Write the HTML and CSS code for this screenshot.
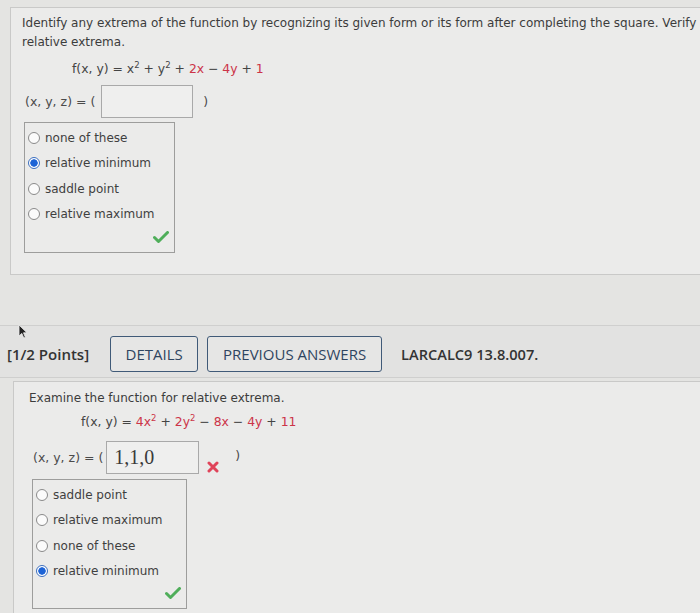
FILE: index.html
```html
<!DOCTYPE html>
<html>
<head>
<meta charset="utf-8">
<link rel="stylesheet" href="styles.css">
</head>
<body>
<div class="page">
  <section class="panel p1">
    <p class="prompt">Identify any extrema of the function by recognizing its given form or its form after completing the square. Verify relative extrema.</p>
    <div class="formula f1">f(x, y) = x<sup>2</sup> + y<sup>2</sup> + <span class="red">2x</span> &minus; <span class="red">4y</span> + <span class="red">1</span></div>
    <div class="answer a1">
      <span class="lbl">(x, y, z) = (</span>
      <span class="box"></span>
      <span class="close">)</span>
    </div>
    <div class="choices c1">
      <div class="opt"><span class="radio"></span>none of these</div>
      <div class="opt"><span class="radio on"></span>relative minimum</div>
      <div class="opt"><span class="radio"></span>saddle point</div>
      <div class="opt"><span class="radio"></span>relative maximum</div>
      <div class="checkrow"><svg class="check" width="16" height="12" viewBox="0 0 16 12"><path d="M1.5 6.5 L5.5 10.5 L14.5 1.5" fill="none" stroke="#4fae5a" stroke-width="3" stroke-linecap="round" stroke-linejoin="round"/></svg></div>
    </div>
  </section>

  <div class="bar">
    <span class="pts">[1/2 Points]</span>
    <span class="btn details">DETAILS</span>
    <span class="btn prev">PREVIOUS ANSWERS</span>
    <span class="code">LARCALC9 13.8.007.</span>
  </div>

  <section class="panel p2">
    <p class="prompt">Examine the function for relative extrema.</p>
    <div class="formula f2">f(x, y) = <span class="red">4x<sup>2</sup></span> + <span class="red">2y<sup>2</sup></span> &minus; <span class="red">8x</span> &minus; <span class="red">4y</span> + <span class="red">11</span></div>
    <div class="answer a2">
      <span class="lbl">(x, y, z) = (</span>
      <span class="box filled">1,1,0</span>
      <span class="wrong"><svg width="12" height="12" viewBox="0 0 12 12"><path d="M2 2 L10 10 M10 2 L2 10" stroke="#e0445a" stroke-width="3" stroke-linecap="round"/></svg></span>
      <span class="close">)</span>
    </div>
    <div class="choices c2">
      <div class="opt"><span class="radio"></span>saddle point</div>
      <div class="opt"><span class="radio"></span>relative maximum</div>
      <div class="opt"><span class="radio"></span>none of these</div>
      <div class="opt"><span class="radio on"></span>relative minimum</div>
      <div class="checkrow"><svg class="check" width="16" height="12" viewBox="0 0 16 12"><path d="M1.5 6.5 L5.5 10.5 L14.5 1.5" fill="none" stroke="#4fae5a" stroke-width="3" stroke-linecap="round" stroke-linejoin="round"/></svg></div>
    </div>
  </section>

  <svg class="cursor" width="10" height="15" viewBox="0 0 10 15"><path d="M1 1 L1 12 L3.8 9.4 L5.8 14 L7.4 13.3 L5.5 8.8 L9 8.8 Z" fill="#222" stroke="#eee" stroke-width="0.8"/></svg>
</div>
</body>
</html>
```

FILE: styles.css
```css
html, body {
  margin: 0;
  padding: 0;
}
body {
  background: #e4e4e2;
  font-family: "DejaVu Sans", Verdana, sans-serif;
  color: #3c3c3c;
  width: 700px;
  height: 613px;
  overflow: hidden;
}
.page {
  position: relative;
  height: 613px;
}
.panel {
  background: #ebebea;
  border-top: 1px solid #c9c9c8;
  border-left: 1px solid #c9c9c8;
  box-sizing: border-box;
}
.p1 {
  margin: 7px 0 0 10px;
  height: 268px;
  border-bottom: 1px solid #c9c9c8;
  padding: 6px 0 0 11px;
}
.prompt {
  margin: 0;
  font-size: 12px;
  line-height: 19px;
}
.formula {
  font-size: 12.4px;
  color: #444;
  line-height: 16px;
}
.formula sup {
  font-size: 8.5px;
  vertical-align: 5px;
  line-height: 0;
}
.red {
  color: #cc3448;
}
.f1 {
  margin: 9px 0 0 50px;
}
.answer {
  display: flex;
  align-items: center;
  font-size: 12.5px;
  color: #4a4a4a;
}
.a1 {
  margin: 8px 0 0 3px;
}
.box {
  display: block;
  width: 90px;
  height: 31px;
  border: 1px solid #a9a9a9;
  background: #efefee;
  margin-left: 6px;
}
.close {
  margin-left: 10px;
}
.choices {
  border: 1px solid #9d9d9c;
  background: #ebebea;
  box-sizing: border-box;
  padding-top: 2px;
}
.c1 {
  width: 151px;
  height: 131px;
  margin: 4px 0 0 2px;
}
.opt {
  display: flex;
  align-items: center;
  height: 25.5px;
  font-size: 12px;
  color: #3f3f3f;
  padding-left: 3px;
}
.radio {
  width: 10px;
  height: 10px;
  border: 1px solid #8a8a8a;
  border-radius: 50%;
  background: #fbfbfb;
  margin-right: 5px;
  box-sizing: content-box;
  flex: none;
}
.radio.on {
  border-color: #3d6fbf;
  background: radial-gradient(circle, #1c63d6 0 3.4px, #ffffff 4px);
}
.checkrow {
  display: flex;
  justify-content: flex-end;
  padding: 4px 5px 0 0;
}
.bar {
  margin-top: 50px;
  height: 53px;
  border-top: 1px solid #cfcfce;
  border-bottom: 1px solid #cfcfce;
  background: #e2e2e1;
  box-sizing: border-box;
  display: flex;
  align-items: center;
  padding: 5px 0 0 7px;
  font-family: "Open Sans", sans-serif;
  color: #2e3440;
}
.pts {
  font-size: 15px;
  font-weight: 600;
  color: #333;
  margin-right: 21px;
}
.btn {
  display: flex;
  align-items: center;
  justify-content: center;
  height: 36px;
  border: 1.5px solid #405a78;
  border-radius: 3px;
  box-sizing: border-box;
  font-size: 15px;
  color: #2e4460;
  background: #e6e6e5;
}
.details {
  width: 88px;
  margin-right: 9px;
}
.prev {
  width: 175px;
  margin-right: 19px;
}
.code {
  font-size: 14.6px;
  font-weight: 600;
  color: #333;
}
.p2 {
  margin: 3px 0 0 13px;
  height: 240px;
  padding: 7px 0 0 15px;
}
.f2 {
  margin: 6px 0 0 52px;
}
.a2 {
  margin: 11px 0 0 4px;
}
.filled {
  font-family: "Liberation Serif", "Times New Roman", serif;
  font-size: 20px;
  color: #3a3a3a;
  line-height: 31px;
  padding-left: 7px;
  box-sizing: border-box;
  width: 93px;
  height: 33px;
  margin-left: 3px;
}
.wrong {
  display: block;
  align-self: flex-end;
  margin: 0 0 1px 8px;
  height: 12px;
}
.a2 .close {
  margin-left: 16px;
  margin-top: -4px;
}
.c2 {
  width: 155px;
  height: 130px;
  margin: 5px 0 0 3px;
}
.c2 .checkrow {
  padding-top: 3px;
}
.cursor {
  position: absolute;
  left: 18px;
  top: 317px;
}
```
